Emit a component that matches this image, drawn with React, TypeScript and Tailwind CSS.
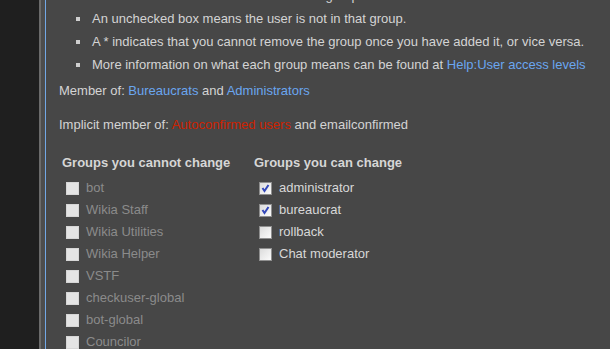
import React from 'react'

const CANNOT_CHANGE = [
  'bot',
  'Wikia Staff',
  'Wikia Utilities',
  'Wikia Helper',
  'VSTF',
  'checkuser-global',
  'bot-global',
  'Councilor',
]

const CAN_CHANGE = [
  { label: 'administrator', checked: true },
  { label: 'bureaucrat', checked: true },
  { label: 'rollback', checked: false },
  { label: 'Chat moderator', checked: false },
]

function Box({ checked, disabled }: { checked?: boolean; disabled?: boolean }) {
  if (disabled) {
    return <span className="block h-[13px] w-[13px] shrink-0 border border-[#d6d6d6] bg-[#e4e4e4]" />
  }
  return (
    <span className="flex h-[13px] w-[13px] shrink-0 items-center justify-center border border-[#8f8f8f] bg-gradient-to-br from-[#dcdcdc] to-[#fbfbfb]">
      {checked && (
        <svg viewBox="0 0 11 11" className="h-[11px] w-[11px]" aria-hidden="true">
          <path d="M2.5 5 L4.5 8 L8.5 2" fill="none" stroke="#3347b8" strokeWidth="2" />
        </svg>
      )}
    </span>
  )
}

export default function App() {
  return (
    <div className="flex h-[349px] w-[610px] overflow-hidden bg-[#474747] font-['Liberation_Sans',Arial,sans-serif] text-[13px] text-[#d4d4d4]">
      <div className="w-[39px] shrink-0 bg-[#1f1f1f]" />
      <div className="w-[2px] shrink-0 bg-[#6b6b6b]" />
      <div className="w-[4px] shrink-0 bg-[#4d4d4d]" />
      <div className="w-px shrink-0 bg-[#72a8e6]" />

      <div className="min-w-0 flex-1 pl-[13px]">
        <ul className="mt-[-16px] pl-[17px]">
          {[
            'A checked box means the user is in that group.',
            'An unchecked box means the user is not in that group.',
            'A * indicates that you cannot remove the group once you have added it, or vice versa.',
          ].map((text) => (
            <li key={text} className="flex h-[23px] items-center gap-[12px] whitespace-nowrap">
              <span className="h-[4px] w-[4px] shrink-0 bg-[#cfcfcf]" />
              {text}
            </li>
          ))}
          <li className="flex h-[23px] items-center gap-[12px] whitespace-nowrap">
            <span className="h-[4px] w-[4px] shrink-0 bg-[#cfcfcf]" />
            <span>
              More information on what each group means can be found at{' '}
              <span className="text-[#6aa6f0]">Help:User access levels</span>
            </span>
          </li>
        </ul>

        <p className="mt-[5px] leading-[20px]">
          Member of: <span className="text-[#6aa6f0]">Bureaucrats</span> and{' '}
          <span className="text-[#6aa6f0]">Administrators</span>
        </p>

        <p className="mt-[14px] leading-[20px]">
          Implicit member of: <span className="text-[#cc2200]">Autoconfirmed users</span> and emailconfirmed
        </p>

        <div className="mt-[19px] flex pl-[3px]">
          <div className="w-[192px]">
            <h3 className="text-[13px] font-bold leading-[18px] text-[#d6d6d6]">Groups you cannot change</h3>
            <div className="mt-[5px] pl-[4px]">
              {CANNOT_CHANGE.map((name) => (
                <label key={name} className="flex h-[22px] items-center gap-[7px] text-[#8b8b8b]">
                  <Box disabled />
                  {name}
                </label>
              ))}
            </div>
          </div>
          <div>
            <h3 className="text-[13px] font-bold leading-[18px] text-[#d6d6d6]">Groups you can change</h3>
            <div className="mt-[5px] pl-[5px]">
              {CAN_CHANGE.map((item) => (
                <label key={item.label} className="flex h-[22px] items-center gap-[7px] text-[#d8d8d8]">
                  <Box checked={item.checked} />
                  {item.label}
                </label>
              ))}
            </div>
          </div>
        </div>
      </div>
    </div>
  )
}
